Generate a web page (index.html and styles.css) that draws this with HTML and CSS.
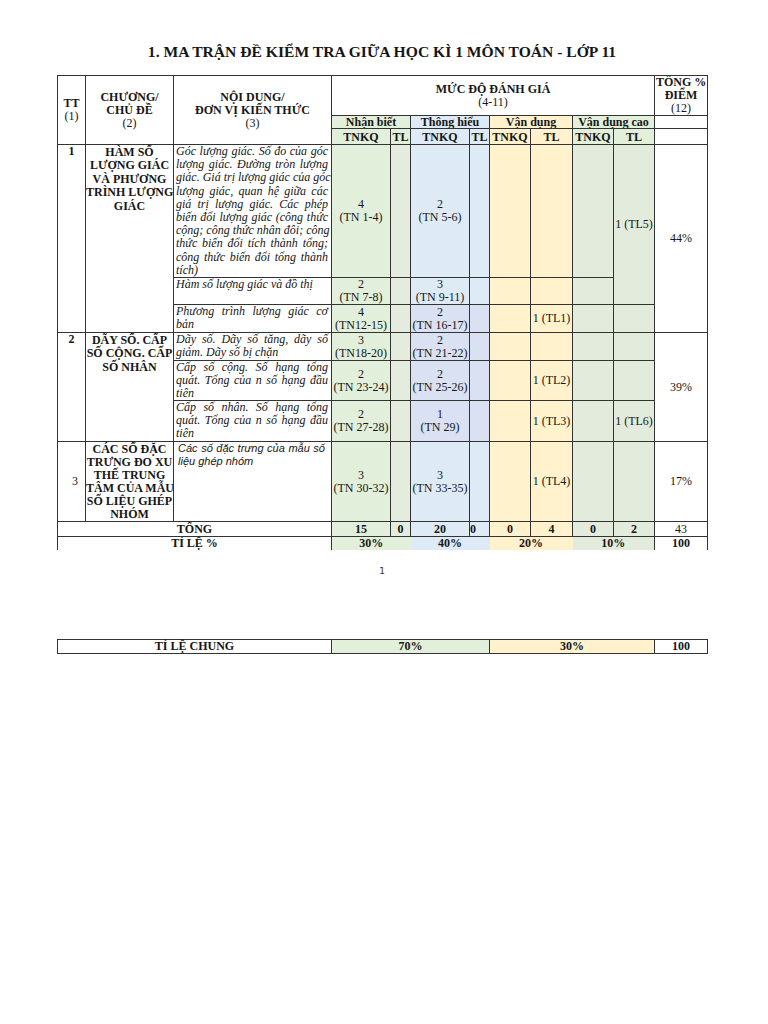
FILE: index.html
```html
<!DOCTYPE html>
<html lang="vi">
<head>
<meta charset="utf-8">
<title>Ma trận đề kiểm tra giữa học kì 1 môn Toán - Lớp 11</title>
<link rel="stylesheet" href="styles.css">
</head>
<body>
<div class="page">
  <h1 class="title">1. MA TRẬN ĐỀ KIỂM TRA GIỮA HỌC KÌ 1 MÔN TOÁN - LỚP 11</h1>

  <table class="matrix">
    <colgroup>
      <col class="w-tt"><col class="w-chap"><col class="w-content">
      <col class="w-nbq"><col class="w-nbl"><col class="w-thq"><col class="w-thl">
      <col class="w-vdq"><col class="w-vdl"><col class="w-vdcq"><col class="w-vdcl">
      <col class="w-total">
    </colgroup>
    <tr class="h-1">
      <th rowspan="3">TT<br><span class="n">(1)</span></th>
      <th rowspan="3">CHƯƠNG/<br>CHỦ ĐỀ<br><span class="n">(2)</span></th>
      <th rowspan="3">NỘI DUNG/<br>ĐƠN VỊ KIẾN THỨC<br><span class="n">(3)</span></th>
      <th colspan="8">MỨC ĐỘ ĐÁNH GIÁ<br><span class="n">(4-11)</span></th>
      <th class="tot-head">TỔNG %<br>ĐIỂM<br><span class="n">(12)</span></th>
    </tr>
    <tr class="h-2">
      <th colspan="2" class="nb">Nhận biết</th>
      <th colspan="2" class="th">Thông hiểu</th>
      <th colspan="2" class="vd">Vận dụng</th>
      <th colspan="2" class="nb">Vận dụng cao</th>
      <th></th>
    </tr>
    <tr class="h-3">
      <th class="nb">TNKQ</th><th class="nb">TL</th>
      <th class="th">TNKQ</th><th class="th">TL</th>
      <th class="vd">TNKQ</th><th class="vd">TL</th>
      <th class="nb">TNKQ</th><th class="nb">TL</th>
      <th></th>
    </tr>

    <tr class="r-1">
      <td rowspan="3" class="b top">1</td>
      <td rowspan="3" class="b top chap">HÀM SỐ<br>LƯỢNG GIÁC<br>VÀ PHƯƠNG<br>TRÌNH LƯỢNG<br>GIÁC</td>
      <td class="content">
        <span class="l">Góc lượng giác. Số đo của góc</span>
        <span class="l">lượng giác. Đường tròn lượng</span>
        <span class="l">giác. Giá trị lượng giác của góc</span>
        <span class="l">lượng giác, quan hệ giữa các</span>
        <span class="l">giá trị lượng giác. Các phép</span>
        <span class="l">biến đổi lượng giác (công thức</span>
        <span class="l">cộng; công thức nhân đôi; công</span>
        <span class="l">thức biến đổi tích thành tổng;</span>
        <span class="l">công thức biến đổi tổng thành</span>
        <span class="last">tích)</span>
      </td>
      <td class="nb">4<br>(TN 1-4)</td><td class="nbt"></td>
      <td class="th">2<br>(TN 5-6)</td><td class="th"></td>
      <td class="vd"></td><td class="vd"></td>
      <td class="vdc"></td><td class="vdc" rowspan="2">1 (TL5)</td>
      <td rowspan="3">44%</td>
    </tr>
    <tr class="r-2">
      <td class="content"><span class="last">Hàm số lượng giác và đồ thị</span></td>
      <td class="nb">2<br>(TN 7-8)</td><td class="nbt"></td>
      <td class="th">3<br>(TN 9-11)</td><td class="th"></td>
      <td class="vd"></td><td class="vd"></td>
      <td class="vdc"></td>
    </tr>
    <tr class="r-3">
      <td class="content">
        <span class="l">Phương trình lượng giác cơ</span>
        <span class="last">bản</span>
      </td>
      <td class="nb">4<br>(TN12-15)</td><td class="nbt"></td>
      <td class="th2">2<br>(TN 16-17)</td><td class="th2"></td>
      <td class="vd"></td><td class="vd">1 (TL1)</td>
      <td class="vdc"></td><td class="vdc"></td>
    </tr>

    <tr class="r-4">
      <td rowspan="3" class="b top">2</td>
      <td rowspan="3" class="b top chap">DÃY SỐ. CẤP<br>SỐ CỘNG. CẤP<br>SỐ NHÂN</td>
      <td class="content">
        <span class="l">Dãy số. Dãy số tăng, dãy số</span>
        <span class="last">giảm. Dãy số bị chặn</span>
      </td>
      <td class="nb">3<br>(TN18-20)</td><td class="nbt"></td>
      <td class="th2">2<br>(TN 21-22)</td><td class="th2"></td>
      <td class="vd"></td><td class="vd"></td>
      <td class="vdc"></td><td class="vdc"></td>
      <td rowspan="3">39%</td>
    </tr>
    <tr class="r-5">
      <td class="content">
        <span class="l">Cấp số cộng. Số hạng tổng</span>
        <span class="l">quát. Tổng của n số hạng đầu</span>
        <span class="last">tiên</span>
      </td>
      <td class="nb">2<br>(TN 23-24)</td><td class="nbt"></td>
      <td class="th2">2<br>(TN 25-26)</td><td class="th2"></td>
      <td class="vd"></td><td class="vd">1 (TL2)</td>
      <td class="vdc"></td><td class="vdc"></td>
    </tr>
    <tr class="r-6">
      <td class="content">
        <span class="l">Cấp số nhân. Số hạng tổng</span>
        <span class="l">quát. Tổng của n số hạng đầu</span>
        <span class="last">tiên</span>
      </td>
      <td class="nb">2<br>(TN 27-28)</td><td class="nbt"></td>
      <td class="th2">1<br>(TN 29)</td><td class="th2"></td>
      <td class="vd"></td><td class="vd">1 (TL3)</td>
      <td class="vdc"></td><td class="vdc">1 (TL6)</td>
    </tr>

    <tr class="r-7">
      <td class="tt3">3</td>
      <td class="b chap">CÁC SỐ ĐẶC<br>TRƯNG ĐO XU<br>THẾ TRUNG<br>TÂM CỦA MẪU<br>SỐ LIỆU GHÉP<br>NHÓM</td>
      <td class="content sans">
        <span class="l">Các số đặc trưng của mẫu số</span>
        <span class="last">liệu ghép nhóm</span>
      </td>
      <td class="nb">3<br>(TN 30-32)</td><td class="nbt"></td>
      <td class="th">3<br>(TN 33-35)</td><td class="th"></td>
      <td class="vd"></td><td class="vd">1 (TL4)</td>
      <td class="vdc"></td><td class="vdc"></td>
      <td>17%</td>
    </tr>

    <tr class="r-sum">
      <td colspan="3" class="b">TỔNG</td>
      <td class="nb b">15</td><td class="nbt b">0</td>
      <td class="th b">20</td><td class="th b left">0</td>
      <td class="vd b">0</td><td class="vd b">4</td>
      <td class="vdc b">0</td><td class="vdc b">2</td>
      <td>43</td>
    </tr>
    <tr class="r-pct">
      <td colspan="3" class="b">TỈ LỆ %</td>
      <td colspan="2" class="nb b">30%</td>
      <td colspan="2" class="th b">40%</td>
      <td colspan="2" class="vd b">20%</td>
      <td colspan="2" class="vdc b">10%</td>
      <td class="b edge">100</td>
    </tr>
  </table>

  <p class="pageno">1</p>

  <table class="overall">
    <colgroup>
      <col class="o-label"><col class="o-a"><col class="o-b"><col class="o-c">
    </colgroup>
    <tr>
      <td>TỈ LỆ CHUNG</td>
      <td class="nb">70%</td>
      <td class="vd">30%</td>
      <td>100</td>
    </tr>
  </table>
</div>
</body>
</html>
```

FILE: styles.css
```css
html, body {
  margin: 0;
  padding: 0;
  background: #ffffff;
}

body {
  font-family: "Liberation Serif", "Times New Roman", serif;
  color: #161616;
}

.page {
  padding: 43px 0 0 57px;
}

.title {
  width: 650px;
  margin: 0 0 15px;
  font-size: 15.6px;
  line-height: 17px;
  font-weight: bold;
  text-align: center;
}

/* ---------- main matrix ---------- */
.matrix {
  border-collapse: collapse;
  table-layout: fixed;
  width: 650px;
  font-size: 12px;
  line-height: 13px;
}

.matrix th,
.matrix td {
  border: 1px solid #333333;
  padding: 0;
  text-align: center;
  vertical-align: middle;
  overflow: hidden;
  white-space: nowrap;
}

.matrix th {
  font-weight: bold;
}

.matrix .n {
  font-weight: normal;
}

.w-tt { width: 28px; }
.w-chap { width: 88px; }
.w-content { width: 158px; }
.w-nbq { width: 59px; }
.w-nbl { width: 20px; }
.w-thq { width: 59px; }
.w-thl { width: 20px; }
.w-vdq { width: 41px; }
.w-vdl { width: 42px; }
.w-vdcq { width: 41px; }
.w-vdcl { width: 41px; }
.w-total { width: 53px; }

.h-1 { height: 40px; }
.h-2 { height: 13px; }
.h-3 { height: 16px; }
.h-2 th, .h-3 th { line-height: 12px; }
.r-1 { height: 133px; }
.r-2 { height: 27px; }
.r-3 { height: 28px; }
.r-4 { height: 28px; }
.r-5 { height: 40px; }
.r-6 { height: 41px; }
.r-7 { height: 80px; }
.r-sum { height: 15px; }
.r-pct { height: 13px; }
.r-sum td, .r-pct td { line-height: 12px; }

.tot-head {
  vertical-align: top;
}

.b { font-weight: bold; }
.top { vertical-align: top !important; }
.left { text-align: left !important; }

.tt3 {
  padding-left: 7px !important;
}

.chap {
  line-height: 13.4px;
  padding-top: 1px !important;
}

.r-7 .chap {
  line-height: 13px;
  padding-top: 0 !important;
}

.content {
  vertical-align: top !important;
  text-align: left !important;
  font-style: italic;
  padding: 0 3px 0 2px !important;
  white-space: normal !important;
}

.r-1 .content {
  line-height: 13.2px;
}

.content .l {
  display: block;
  text-align: justify;
  text-align-last: justify;
  white-space: nowrap;
}

.content .last {
  display: block;
  text-align: left;
}

.content.sans {
  font-family: "Liberation Sans", Arial, sans-serif;
  font-size: 11px;
  padding-left: 4px !important;
  padding-right: 6px !important;
}

/* column tints */
.nb { background: #e2efda; }
.nbt { background: #e4ecde; }
.th { background: #deebf7; }
.th2 { background: #d9e1f2; }
.vd { background: #fff2cc; }
.vdc { background: #e3ebdd; }

/* last row: no bottom rule, no inner separators */
.r-pct td {
  border-bottom: none;
}
.r-pct td.nb,
.r-pct td.th,
.r-pct td.vd,
.r-pct td.vdc {
  border-left: none;
  border-right: none;
}
.r-pct td.edge {
  border-left: 1px solid #333333;
}

/* ---------- page number ---------- */
.pageno {
  width: 650px;
  margin: 15px 0 0;
  font-family: "DejaVu Sans", sans-serif;
  font-size: 9px;
  line-height: 12px;
  text-align: center;
  color: #333333;
}

/* ---------- overall ratio ---------- */
.overall {
  margin-top: 62px;
  border-collapse: collapse;
  table-layout: fixed;
  width: 650px;
  font-size: 12px;
  line-height: 12px;
  font-weight: bold;
}

.overall td {
  border: 1px solid #333333;
  padding: 0;
  height: 13px;
  text-align: center;
}

.o-label { width: 274px; }
.o-a { width: 158px; }
.o-b { width: 165px; }
.o-c { width: 53px; }
```
